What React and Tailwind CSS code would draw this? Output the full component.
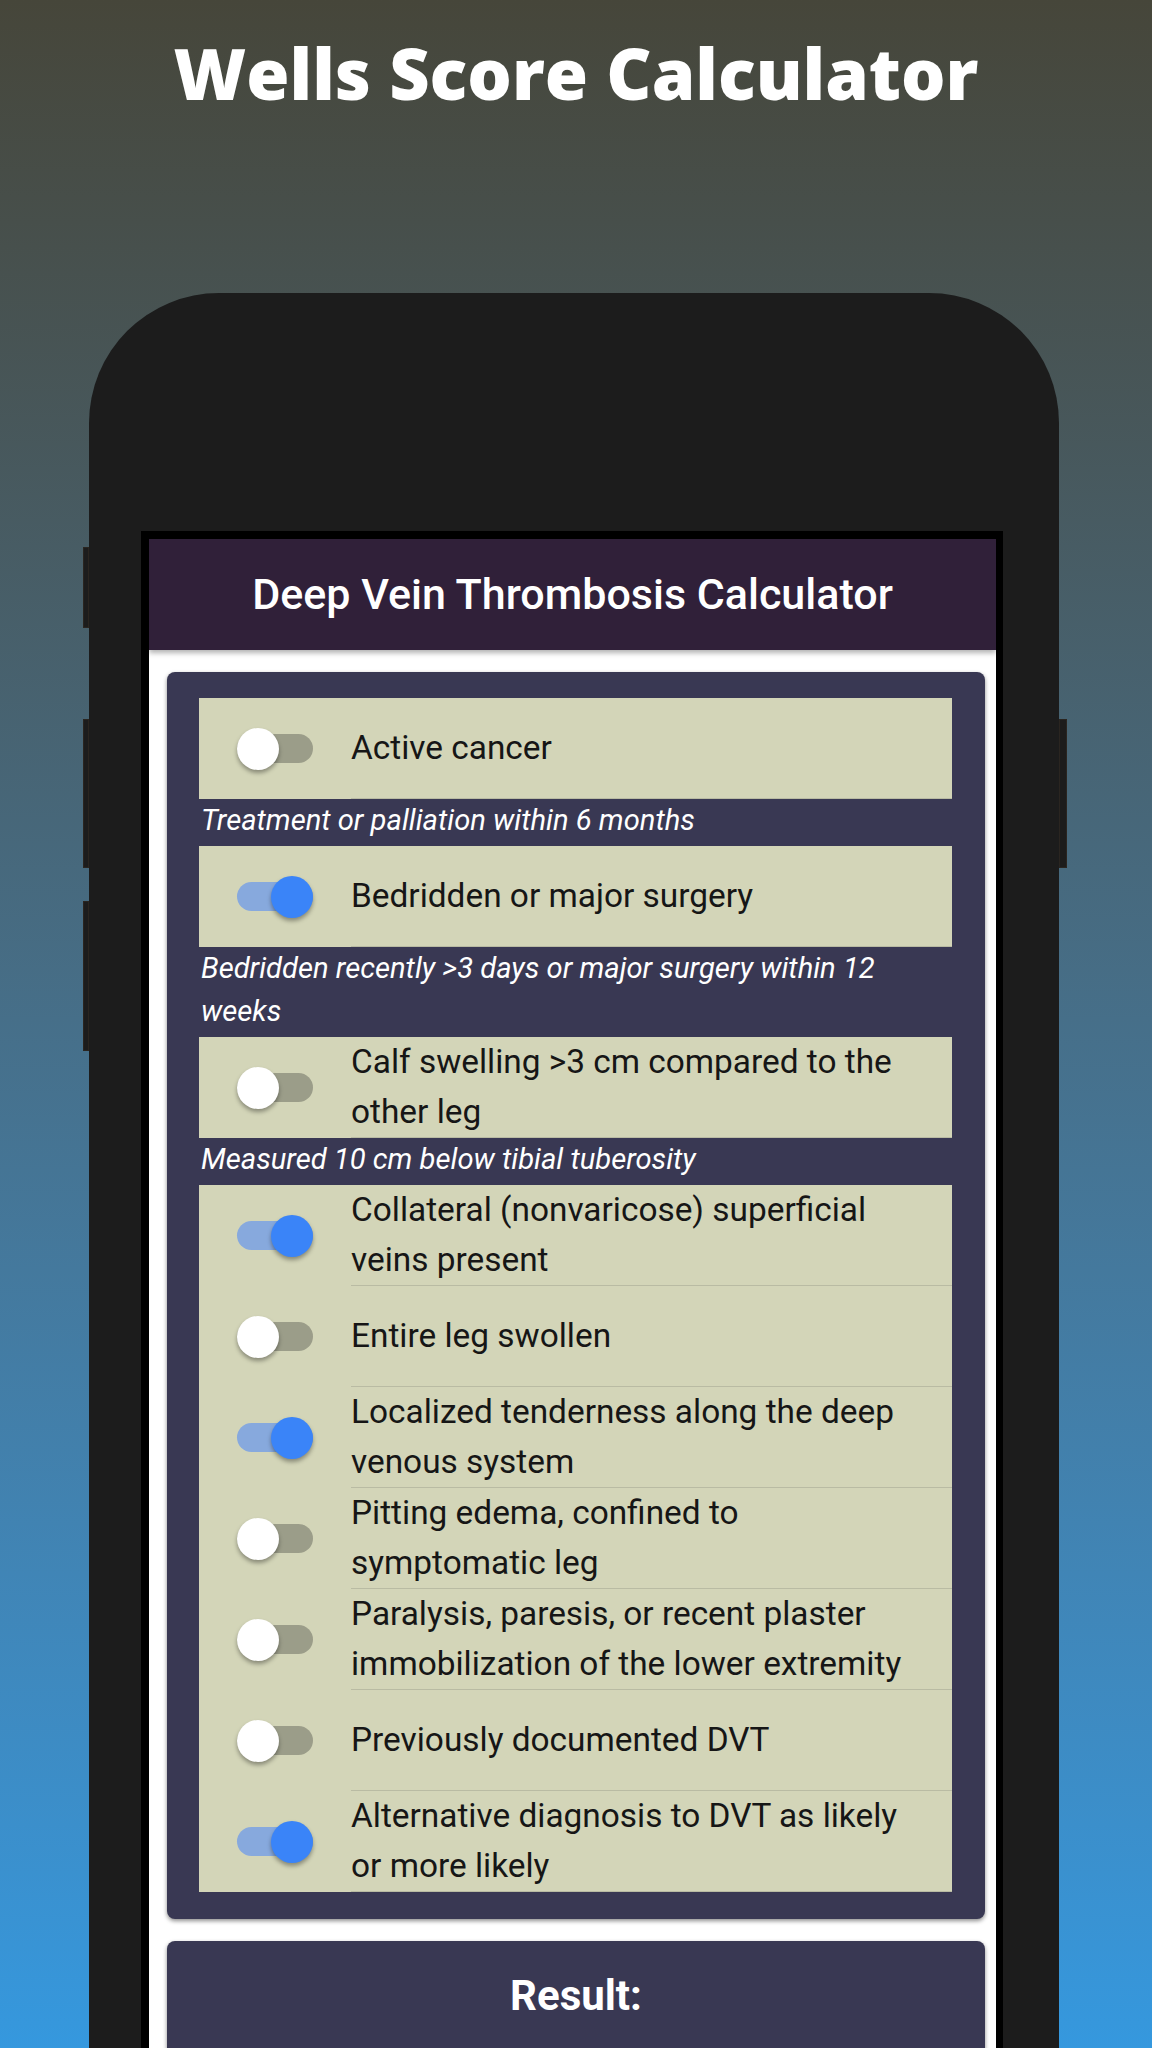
import { useState } from 'react'

const groups = [
  {
    items: [{ label: 'Active cancer', on: false }],
    note: 'Treatment or palliation within 6 months',
  },
  {
    items: [{ label: 'Bedridden or major surgery', on: true }],
    note: 'Bedridden recently >3 days or major surgery within 12 weeks',
  },
  {
    items: [{ label: 'Calf swelling >3 cm compared to the other leg', on: false }],
    note: 'Measured 10 cm below tibial tuberosity',
  },
  {
    items: [
      { label: 'Collateral (nonvaricose) superficial veins present', on: true },
      { label: 'Entire leg swollen', on: false },
      { label: 'Localized tenderness along the deep venous system', on: true },
      { label: 'Pitting edema, confined to symptomatic leg', on: false },
      { label: 'Paralysis, paresis, or recent plaster immobilization of the lower extremity', on: false },
      { label: 'Previously documented DVT', on: false },
      { label: 'Alternative diagnosis to DVT as likely or more likely', on: true },
    ],
  },
]

function Toggle({ on, onClick }) {
  return (
    <button onClick={onClick} className="relative w-[76px] h-[42px] flex items-center">
      <span className={'block w-full h-[29px] rounded-full ' + (on ? 'bg-[#87a9dd]' : 'bg-[#9b9d89]')} />
      <span
        className={
          'absolute top-0 w-[42px] h-[42px] rounded-full shadow-[0_3px_4px_rgba(0,0,0,0.35)] ' +
          (on ? 'right-0 bg-[#3a84f8]' : 'left-0 bg-white')
        }
      />
    </button>
  )
}

function Row({ item }) {
  const [on, setOn] = useState(item.on)
  return (
    <div className="flex">
      <div className="w-[152px] shrink-0 flex items-center pl-[38px]">
        <Toggle on={on} onClick={() => setOn(!on)} />
      </div>
      <div className="flex-1 min-h-[101px] flex items-center border-b border-[#b9bba3] pr-[42px] text-[33.4px] leading-[50px] text-[#161616]">
        {item.label}
      </div>
    </div>
  )
}

export default function App() {
  return (
    <div className="w-[1152px] h-[2048px] overflow-hidden bg-linear-to-b from-[#46463a] to-[#3598de]">
      <div className="h-[293px] pt-[26px] text-center">
        <h1
          className="text-[70px] font-extrabold leading-[94px] text-white"
          style={{ fontFamily: '"Open Sans", sans-serif' }}
        >
          Wells Score Calculator
        </h1>
      </div>

      <div className="relative ml-[89px] w-[970px] h-[1800px] rounded-t-[130px] bg-[#1c1c1c] pt-[238px] pl-[52px] pr-[56px]">
        {/* side buttons */}
        <div className="absolute left-[-6px] top-[254px] w-[6px] h-[81px] bg-[#1c1c1c] border border-[#2a2520]" />
        <div className="absolute left-[-6px] top-[426px] w-[6px] h-[149px] bg-[#1c1c1c] border border-[#2a2520]" />
        <div className="absolute left-[-6px] top-[608px] w-[6px] h-[150px] bg-[#1c1c1c] border border-[#2a2520]" />
        <div className="absolute right-[-8px] top-[426px] w-[8px] h-[149px] bg-[#1c1c1c] border border-[#2a2520]" />

        <div
          className="h-full bg-white border-t-[8px] border-l-[8px] border-r-[7px] border-black"
          style={{ fontFamily: 'Roboto, "Liberation Sans", sans-serif' }}
        >
          <div className="relative z-10 h-[111px] bg-[#302039] flex items-center justify-center shadow-[0_3px_5px_rgba(0,0,0,0.3)]">
            <h2 className="text-[43px] font-medium text-white">Deep Vein Thrombosis Calculator</h2>
          </div>

          <div className="pt-[22px] pl-[18px] pr-[11px]">
            <div className="rounded-lg bg-[#393853] pt-[26px] pb-[27px] pl-[32px] pr-[33px] shadow-[0_2px_4px_rgba(0,0,0,0.45)]">
              {groups.map((g, i) => (
                <div key={i}>
                  <div className="bg-[#d3d5b8]">
                    {g.items.map((item) => (
                      <Row key={item.label} item={item} />
                    ))}
                  </div>
                  {g.note && (
                    <p className="text-[29.2px] italic leading-[43px] text-white pb-[4px] pl-[2px] pr-[40px]">
                      {g.note}
                    </p>
                  )}
                </div>
              ))}
            </div>

            <div className="mt-[22px] rounded-t-lg bg-[#393853] pt-[30px] h-[200px] text-center shadow-[0_2px_4px_rgba(0,0,0,0.45)]">
              <h3 className="text-[42px] font-bold text-white leading-[50px]">Result:</h3>
            </div>
          </div>
        </div>
      </div>
    </div>
  )
}
